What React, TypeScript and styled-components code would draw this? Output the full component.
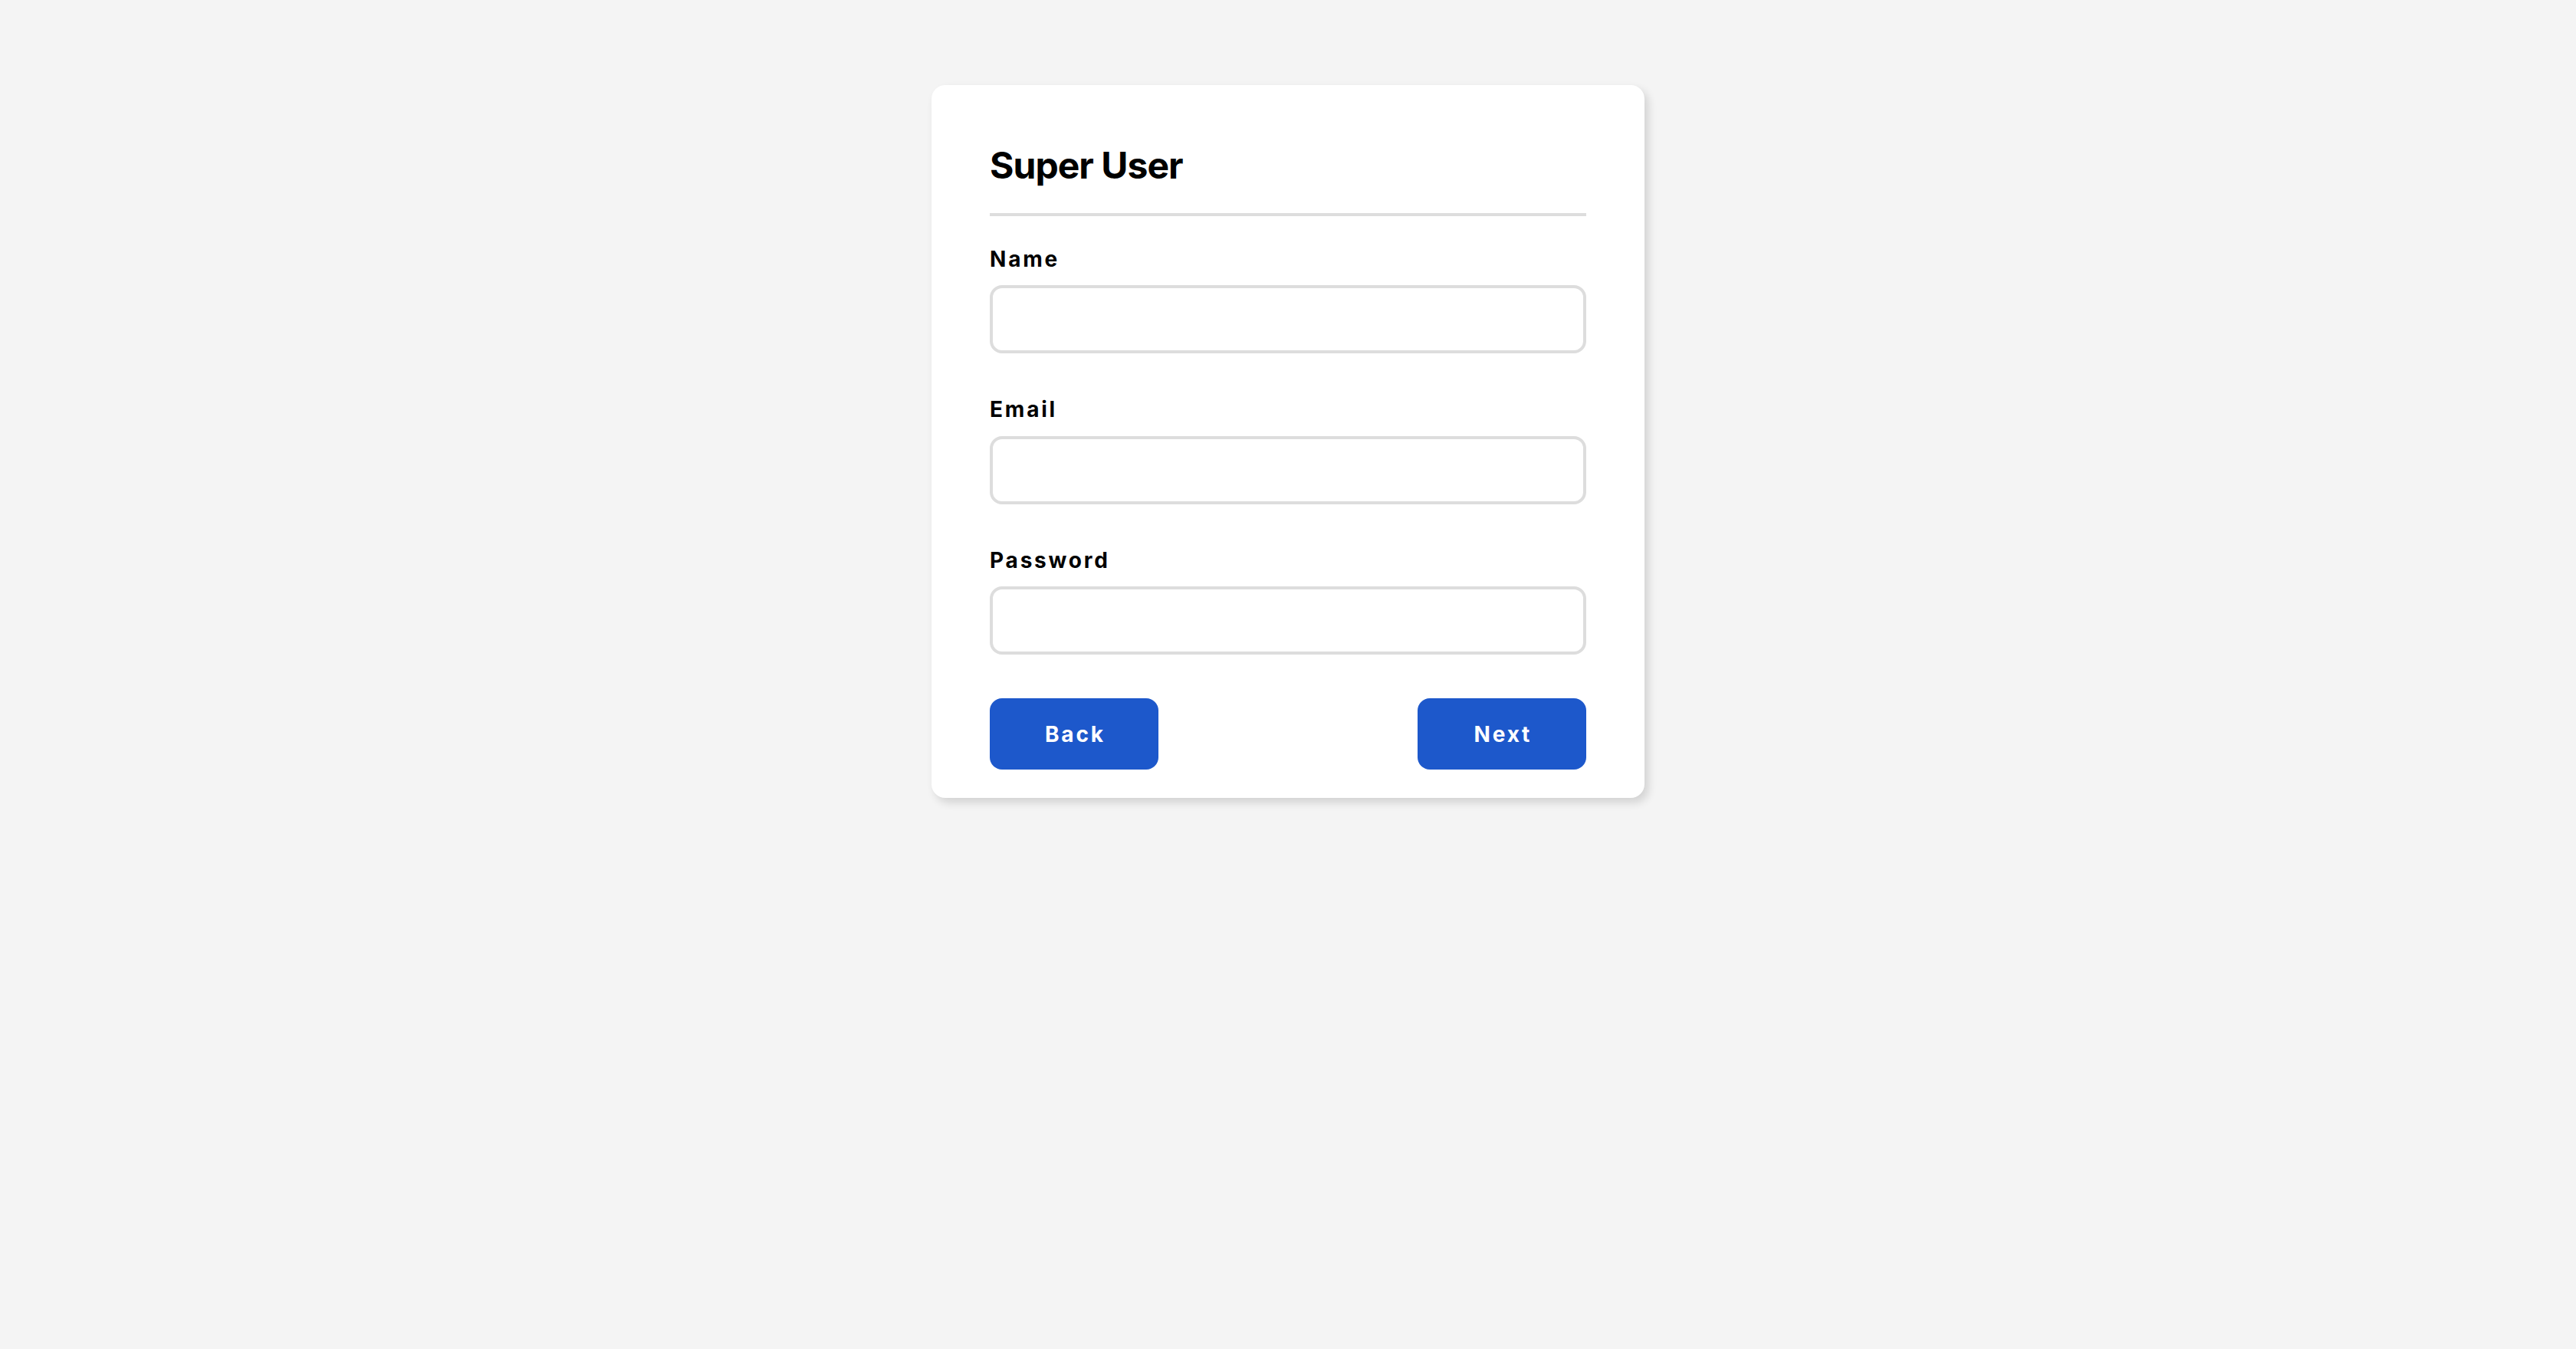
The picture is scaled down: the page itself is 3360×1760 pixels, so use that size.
import React from "react";
import styled, { createGlobalStyle } from "styled-components";

const GlobalStyle = createGlobalStyle`
  html, body {
    margin: 0;
    padding: 0;
    background: #f4f4f4;
    font-family: Inter, "Noto Sans", "Liberation Sans", sans-serif;
  }
  * { box-sizing: border-box; }
`;

const Page = styled.div`
  min-height: 1760px;
  background: #f4f4f4;
  display: flex;
  justify-content: center;
  align-items: flex-start;
  padding-top: 111px;
`;

const Card = styled.div`
  width: 930px;
  background: #ffffff;
  border-radius: 18px;
  padding: 76px 76px 37px;
  box-shadow: 5px 6px 12px rgba(0, 0, 0, 0.14);
  display: flex;
  flex-direction: column;
`;

const Title = styled.h2`
  margin: 0;
  font-size: 48px;
  line-height: 1.2;
  font-weight: 700;
  letter-spacing: -0.02em;
  color: #000;
  padding-bottom: 33px;
  border-bottom: 4px solid #dddddd;
`;

const Form = styled.form`
  display: flex;
  flex-direction: column;
  gap: 57px;
  margin-top: 40px;
`;

const Field = styled.div`
  display: flex;
  flex-direction: column;
  gap: 17px;
`;

const Label = styled.label`
  font-size: 28px;
  line-height: 1.2;
  font-weight: 700;
  letter-spacing: 0.1em;
  color: #000;
`;

const Input = styled.input`
  height: 89px;
  width: 100%;
  border: 4px solid #dddddd;
  border-radius: 16px;
  background: #fff;
  padding: 0 24px;
  font-size: 28px;
  font-family: inherit;
  outline: none;
`;

const Actions = styled.div`
  display: flex;
  justify-content: space-between;
  align-items: center;
`;

const Button = styled.button`
  width: 220px;
  height: 93px;
  border: none;
  border-radius: 16px;
  background: #1d58cb;
  color: #fff;
  font-family: inherit;
  font-size: 28px;
  font-weight: 700;
  letter-spacing: 0.1em;
  cursor: pointer;
  padding: 0 0 0 0.1em;
`;

const fields = [
  { id: "name", label: "Name", type: "text" },
  { id: "email", label: "Email", type: "email" },
  { id: "password", label: "Password", type: "password" },
];

export default function App() {
  return (
    <>
      <GlobalStyle />
      <Page>
        <Card>
          <Title>Super User</Title>
          <Form onSubmit={(e) => e.preventDefault()}>
            {fields.map((f) => (
              <Field key={f.id}>
                <Label htmlFor={f.id}>{f.label}</Label>
                <Input id={f.id} type={f.type} />
              </Field>
            ))}
            <Actions>
              <Button type="button">Back</Button>
              <Button type="submit">Next</Button>
            </Actions>
          </Form>
        </Card>
      </Page>
    </>
  );
}
